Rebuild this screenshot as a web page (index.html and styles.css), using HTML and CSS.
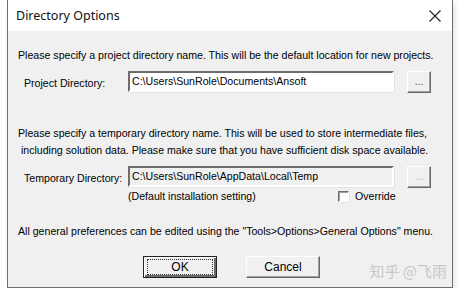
FILE: index.html
```html
<!DOCTYPE html>
<html lang="en">
<head>
  <meta charset="UTF-8" />
  <title>Directory Options</title>
  <link rel="stylesheet" href="styles.css">
</head>
<body>

  <div class="window">
    <div class="titlebar">
      <span class="title">Directory Options</span>
      <svg class="close" width="12" height="12" viewBox="0 0 12 12">
        <path d="M0.5 0.5 L11.5 11.5 M11.5 0.5 L0.5 11.5" stroke="#222" stroke-width="1.1" fill="none"/>
      </svg>
    </div>

    <div class="content">
      <p class="note first">Please specify a project directory name. This will be the default location for new projects.</p>

      <div class="row">
        <span class="label">Project Directory:</span>
        <div class="field">C:\Users\SunRole\Documents\Ansoft</div>
        <div class="btn small">...</div>
      </div>

      <p class="note second">Please specify a temporary directory name. This will be used to store intermediate files,<br>&nbsp;including solution data. Please make sure that you have sufficient disk space available.</p>

      <div class="row">
        <span class="label">Temporary Directory:</span>
        <div class="field disabled">C:\Users\SunRole\AppData\Local\Temp</div>
        <div class="btn small disabled">...</div>
      </div>

      <div class="subrow">
        <span class="hint">(Default installation setting)</span>
        <label class="check"><span class="box"></span>Override</label>
      </div>

      <p class="note third">All general preferences can be edited using the "Tools&gt;Options&gt;General Options" menu.</p>

      <div class="actions">
        <div class="btn wide default"><span class="focus">OK</span></div>
        <div class="btn wide">Cancel</div>
      </div>
    </div>

    <div class="mark">知乎 @飞雨</div>
  </div>

</body>
</html>
```

FILE: styles.css
```css
body {
  margin: 0;
  background: #fff;
  font-family: "Liberation Sans", Arial, sans-serif;
  font-size: 10.6px;
  color: #000;
}

.window {
  position: relative;
  margin-left: 7px;
  width: 444px;
  height: 287px;
  border: 1px solid #6f6f6f;
  border-top: none;
  background: #f0f0f0;
  box-shadow: 2px 3px 6px rgba(0,0,0,0.12);
}

.titlebar {
  height: 31px;
  background: #fff;
  display: flex;
  align-items: center;
  justify-content: space-between;
  padding: 0 11px 0 8px;
}

.title {
  font-family: "Noto Sans", "Open Sans", sans-serif;
  font-size: 12.5px;
  color: #111;
}

.close {
  margin-top: 1px;
}

.content {
  padding: 0 0 0 10px;
}

.note {
  margin: 0;
  line-height: 17px;
  white-space: nowrap;
}

.note.first {
  margin-top: 16px;
}

.note.second {
  margin-top: 33px;
}

.note.third {
  margin-top: 19px;
}

.row {
  display: flex;
  align-items: center;
  height: 22px;
  margin-top: 6px;
}

.label {
  width: 110px;
  padding-left: 6px;
  box-sizing: border-box;
  margin-top: 3px;
  white-space: nowrap;
}

.field {
  width: 266px;
  height: 21px;
  box-sizing: border-box;
  background: #fff;
  border: 2px solid;
  border-color: #6d6d6d #fff #fff #6d6d6d;
  box-shadow: 1px 1px 0 #e3e3e3;
  padding: 1px 2px;
  line-height: 15px;
}

.field.disabled {
  background: #f0f0f0;
}

.btn {
  box-sizing: border-box;
  display: flex;
  align-items: center;
  justify-content: center;
  background: #f0f0f0;
  border: 1px solid;
  border-color: #fff #696969 #696969 #fff;
  box-shadow: inset -1px -1px 0 #a0a0a0;
}

.btn.small {
  width: 24px;
  height: 22px;
  margin-left: 13px;
  margin-top: 1px;
  font-size: 10px;
  color: #444;
}

.btn.small.disabled {
  color: #aaa;
}

.subrow {
  display: flex;
  align-items: center;
  height: 16px;
  padding-left: 110px;
  margin-top: 1px;
}

.hint {
  width: 210px;
}

.check {
  display: flex;
  align-items: center;
}

.box {
  width: 11px;
  height: 11px;
  box-sizing: border-box;
  background: #fff;
  border: 1px solid;
  border-color: #6d6d6d #fff #fff #6d6d6d;
  box-shadow: 1px 1px 0 #e3e3e3, inset 1px 1px 0 #a0a0a0;
  margin-right: 6px;
}

.actions {
  display: flex;
  gap: 29px;
  margin-top: 16px;
  padding-left: 125px;
}

.btn.wide {
  width: 74px;
  height: 22px;
  font-size: 12px;
}

.btn.default {
  border: 1px solid #222;
  box-shadow: inset 1px 1px 0 #fff, inset -2px -2px 0 #696969;
}

.focus {
  display: flex;
  align-items: center;
  justify-content: center;
  width: 64px;
  height: 14px;
  border: 1px dotted #333;
}

.mark {
  position: absolute;
  right: 5px;
  bottom: 6px;
  font-family: "Noto Sans CJK SC", sans-serif;
  font-size: 15px;
  color: #c8c8c8;
}
```
